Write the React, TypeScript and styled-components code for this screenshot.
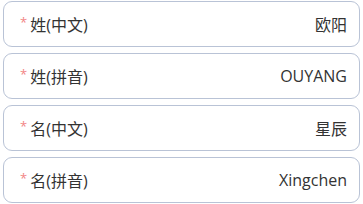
import React from 'react';
import styled, { createGlobalStyle } from 'styled-components';

const GlobalStyle = createGlobalStyle`
  body {
    margin: 0;
    background: #fff;
    font-family: "Open Sans", "Noto Sans CJK SC", sans-serif;
  }
`;

const FormList = styled.div`
  display: flex;
  flex-direction: column;
  gap: 6px;
  padding: 1px 3px;
`;

const FieldRow = styled.div`
  display: flex;
  align-items: center;
  justify-content: space-between;
  height: 46px;
  box-sizing: border-box;
  padding: 0 12px 0 16px;
  border: 1px solid #b9c3d6;
  border-radius: 9px;
  font-size: 16px;
  color: #333;
`;

const Label = styled.span`
  display: flex;
  align-items: center;
`;

const Required = styled.span`
  color: #f28585;
  font-size: 13px;
  margin-right: 3px;
  position: relative;
  top: -2px;
`;

const Value = styled.span`
  text-align: right;
`;

const fields = [
  { label: '姓(中文)', value: '欧阳' },
  { label: '姓(拼音)', value: 'OUYANG' },
  { label: '名(中文)', value: '星辰' },
  { label: '名(拼音)', value: 'Xingchen' },
];

export default function App() {
  return (
    <>
      <GlobalStyle />
      <FormList>
        {fields.map((f) => (
          <FieldRow key={f.label}>
            <Label>
              <Required>*</Required>
              {f.label}
            </Label>
            <Value>{f.value}</Value>
          </FieldRow>
        ))}
      </FormList>
    </>
  );
}
